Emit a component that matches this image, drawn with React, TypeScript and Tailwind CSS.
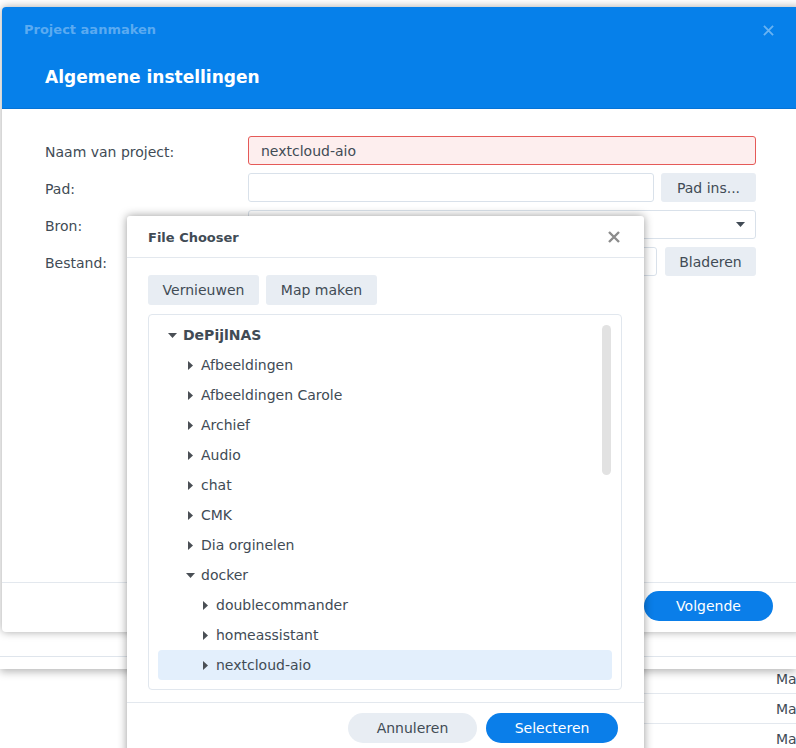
import React from "react";

type Node = { label: string; level: number; open?: boolean; bold?: boolean; selected?: boolean };

const tree: Node[] = [
  { label: "DePijlNAS", level: 0, open: true, bold: true },
  { label: "Afbeeldingen", level: 1 },
  { label: "Afbeeldingen Carole", level: 1 },
  { label: "Archief", level: 1 },
  { label: "Audio", level: 1 },
  { label: "chat", level: 1 },
  { label: "CMK", level: 1 },
  { label: "Dia orginelen", level: 1 },
  { label: "docker", level: 1, open: true },
  { label: "doublecommander", level: 2 },
  { label: "homeassistant", level: 2 },
  { label: "nextcloud-aio", level: 2, selected: true },
];

const levelPad = ["pl-[8px]", "pl-[26px]", "pl-[41px]"];

function Caret({ open }: { open?: boolean }) {
  return (
    <span className="w-[12px] h-[12px] flex items-center justify-center">
      {open ? (
        <svg width="9" height="5" viewBox="0 0 9 5">
          <polygon points="0,0 9,0 4.5,5" fill="#4a4f55" />
        </svg>
      ) : (
        <svg width="5" height="9" viewBox="0 0 5 9">
          <polygon points="0,0 5,4.5 0,9" fill="#4a4f55" />
        </svg>
      )}
    </span>
  );
}

function CloseIcon({ size, color, width }: { size: number; color: string; width: number }) {
  return (
    <svg width={size} height={size} viewBox="0 0 12 12">
      <path d="M1 1L11 11M11 1L1 11" stroke={color} strokeWidth={width} strokeLinecap="butt" />
    </svg>
  );
}

function FormRow({ label, children }: { label: string; children: React.ReactNode }) {
  return (
    <div className="flex items-center h-[29px]">
      <div className="w-[203px] pt-[3px] text-[14px] text-[#414b55]">{label}</div>
      <div className="flex-1 flex h-full gap-[7px]">{children}</div>
    </div>
  );
}

export default function App() {
  return (
    <div className="relative w-[796px] h-[748px] overflow-hidden bg-white font-['DejaVu_Sans',sans-serif] text-[#414b55]">
      {/* back window */}
      <div className="relative z-10 h-[669px] bg-white shadow-[0_3px_8px_rgba(0,0,0,0.28)]">
        <div className="h-[657px] border-b border-[#dfe5ec]" />
      </div>
      <div className="ml-[400px] text-[14px] leading-[20px] whitespace-nowrap">
        <div className="h-[25px] border-b border-[#e3e8ee] pl-[376px]">Ma</div>
        <div className="h-[30px] border-b border-[#e3e8ee] pt-[5px] pl-[376px]">Ma</div>
        <div className="h-[30px] pt-[5px] pl-[376px]">Ma</div>
      </div>

      {/* Project dialog */}
      <div className="absolute z-20 left-[2px] top-[7px] w-[800px] h-[625px] bg-white rounded-[4px] shadow-[0_0_9px_rgba(0,0,0,0.35)] flex flex-col overflow-hidden">
        <div className="h-[102px] bg-[#0680ea] border-b border-[#0573d6] shrink-0">
          <div className="flex items-center justify-between pl-[22px] pr-[28px] pt-[15px] h-[31px]">
            <span className="text-[13px] leading-[16px] font-bold text-white/35">Project aanmaken</span>
            <CloseIcon size={11} color="rgba(255,255,255,0.4)" width={2} />
          </div>
          <div className="pl-[43px] mt-[27px] text-[17px] leading-[24px] font-bold text-white">
            Algemene instellingen
          </div>
        </div>

        <div className="flex-1 pl-[43px] pr-[46px] pt-[27px] flex flex-col gap-[8px]">
          <FormRow label="Naam van project:">
            <div className="flex-1 flex items-center rounded-[3px] border border-[#e55a58] bg-[#fdeeee] pl-[12px] pt-[1px] text-[14px]">
              nextcloud-aio
            </div>
          </FormRow>
          <FormRow label="Pad:">
            <div className="flex-1 rounded-[3px] border border-[#d9e1ea] bg-white" />
            <div className="w-[95px] rounded-[3px] bg-[#e8edf3] flex items-center justify-center pt-[1px] text-[14px]">
              Pad ins...
            </div>
          </FormRow>
          <FormRow label="Bron:">
            <div className="flex-1 rounded-[3px] border border-[#d9e1ea] bg-white flex items-center justify-end pr-[10px]">
              <svg width="9" height="5" viewBox="0 0 9 5">
                <polygon points="0,0 9,0 4.5,5" fill="#414b55" />
              </svg>
            </div>
          </FormRow>
          <FormRow label="Bestand:">
            <div className="flex-1 rounded-[3px] border border-[#d9e1ea] bg-white" />
            <div className="w-[91px] ml-[1px] rounded-[3px] bg-[#e8edf3] flex items-center justify-center pt-[1px] text-[14px]">
              Bladeren
            </div>
          </FormRow>
        </div>

        <div className="h-[50px] shrink-0 border-t border-[#e3e8ee] flex items-start justify-end pr-[29px] pt-[8px]">
          <div className="w-[129px] h-[30px] rounded-full bg-[#0a7ee9] text-white text-[14px] flex items-center justify-center">
            Volgende
          </div>
        </div>
      </div>

      {/* File chooser */}
      <div className="absolute z-30 left-[127px] top-[216px] w-[517px] h-[560px] bg-white rounded-[3px] shadow-[0_0_10px_rgba(0,0,0,0.4)] flex flex-col">
        <div className="h-[42px] shrink-0 border-b border-[#e3e8ee] flex items-center justify-between pl-[21px] pr-[24px]">
          <span className="pt-[3px] text-[13px] font-bold text-[#414b55]">File Chooser</span>
          <CloseIcon size={12} color="#8c8c8c" width={2.4} />
        </div>

        <div className="pl-[21px] pt-[17px] flex gap-[7px]">
          <div className="w-[111px] h-[30px] rounded-[3px] bg-[#e8edf3] flex items-center justify-center text-[14px]">
            Vernieuwen
          </div>
          <div className="w-[111px] h-[30px] rounded-[3px] bg-[#e8edf3] flex items-center justify-center text-[14px]">
            Map maken
          </div>
        </div>

        <div className="relative mt-[9px] ml-[21px] mr-[22px] h-[376px] border border-[#e1e7ee] rounded-[4px] pt-[5px] px-[9px] overflow-hidden">
          {tree.map((n) => (
            <div
              key={n.label}
              className={`h-[30px] flex items-center rounded-[4px] text-[14px] ${levelPad[n.level]} ${
                n.selected ? "bg-[#e3effc]" : ""
              } ${n.bold ? "font-bold" : ""}`}
            >
              <Caret open={n.open} />
              <span className="ml-[5px]">{n.label}</span>
            </div>
          ))}
          <div className="absolute right-[10px] top-[10px] w-[9px] h-[150px] rounded-full bg-[#e2e2e2]" />
        </div>

        <div className="mt-[12px] border-t border-[#e3e8ee] flex justify-end gap-[9px] pr-[26px] pt-[10px]">
          <div className="w-[129px] h-[30px] rounded-full bg-[#e8edf3] flex items-center justify-center text-[14px]">
            Annuleren
          </div>
          <div className="w-[132px] h-[30px] rounded-full bg-[#0a7ee9] text-white flex items-center justify-center text-[14px]">
            Selecteren
          </div>
        </div>
      </div>
    </div>
  );
}
